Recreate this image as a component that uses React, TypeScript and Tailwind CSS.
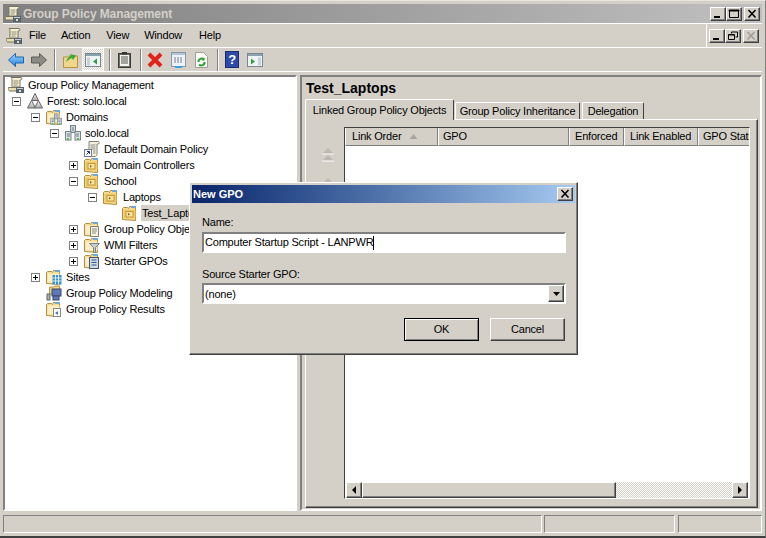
import type { ReactNode } from "react"

const raised = "border border-t-white border-l-white border-r-[#404040] border-b-[#404040] shadow-[inset_-1px_-1px_0_#808080]"
const sunken = "border-2 border-t-[#808080] border-l-[#808080] border-r-white border-b-white"
const checker = "bg-[repeating-conic-gradient(#d4d0c8_0_25%,#fff_0_50%)] bg-[length:2px_2px]"

function ScrollIcon() {
  return (
    <svg width="16" height="16" viewBox="0 0 16 16" className="shrink-0">
      <path d="M3 .5h10c1.200 0 1.200 2 0 2.500h-1v7H5c-1 0-1.500-1-1-2V2.500C4 1.500 3.500 1 3 .5z" fill="#f5f0d4" stroke="#77745e" />
      <path d="M5.500 4h5M5.500 6h5M5.500 8h4" stroke="#8f8c72" />
      <path d="M.5 10.500h9c-.8.800-.8 2.500 0 3.500h-8c-1.200-.5-1.600-2.500-1-3.500z" fill="#e9deb0" stroke="#77745e" />
      <rect x="8" y="10" width="8" height="6" fill="#566370" />
      <rect x="9" y="11" width="6" height="1" fill="#c9d0d6" />
      <rect x="11" y="13" width="2" height="2" fill="#e7dfba" />
    </svg>
  )
}

function ForestIcon() {
  return (
    <svg width="16" height="16" viewBox="0 0 16 16" className="shrink-0">
      <defs>
        <linearGradient id="tri" x1="0" y1="0" x2="0" y2="1">
          <stop offset="0" stopColor="#f4f4f4" />
          <stop offset="1" stopColor="#a8a8a8" />
        </linearGradient>
      </defs>
      <path d="M8 .5l3.500 7h-7z" fill="url(#tri)" stroke="#666" />
      <path d="M4.500 7.500l4 7.500h-8z" fill="url(#tri)" stroke="#666" />
      <path d="M11.500 7.500l4 7.500h-8z" fill="url(#tri)" stroke="#666" />
    </svg>
  )
}

function Server() {
  return (
    <g>
      <rect x="5.500" y=".5" width="5" height="7" fill="#cdd5d9" stroke="#76838a" />
      <rect x=".5" y="6.500" width="5.500" height="8.500" fill="#dbe2e5" stroke="#76838a" />
      <rect x="10" y="6.500" width="5.500" height="8.500" fill="#dbe2e5" stroke="#76838a" />
      <path d="M2 9h3M2 11h3M11 9h3M11 11h3M7 3h2M7 5h2" stroke="#6f7c84" />
      <rect x="2" y="13" width="2" height="2" fill="#55c040" />
      <rect x="12" y="13" width="2" height="2" fill="#55c040" />
    </g>
  )
}

function Folder({ children, ou }: { children?: ReactNode; ou?: boolean }) {
  return (
    <svg width="16" height="16" viewBox="0 0 16 16" className="shrink-0">
      <path d="M.5 14.500v-11l1-1h4l1 1 1-2h6v14z" fill="#f3dc96" stroke="#b58d38" />
      <rect x="9" y="1" width="5" height="2" fill="#6ea8d8" />
      <rect x="1.500" y="4.500" width="12" height="9" fill={ou ? "#f0c964" : "#fbeec4"} />
      {ou && <rect x="4" y="6.500" width="7" height="5.500" fill="#f8e3a0" stroke="#c39a3e" />}
      {ou && <path d="M6 8l2 1.300-2 1.300z" fill="#7c5c16" />}
      {children}
    </svg>
  )
}

function FolderServer() {
  return (
    <Folder>
      <g transform="translate(4.500 4.500) scale(.72)">
        <Server />
      </g>
    </Folder>
  )
}

function GpoIcon() {
  return (
    <svg width="16" height="16" viewBox="0 0 16 16" className="shrink-0">
      <path d="M5 .5h9.500c1 0 1 2 0 2.500H13v10.500c0 1-1 2-2 2H5z" fill="#f3f1e2" stroke="#85836f" />
      <path d="M6.500 4h5M6.500 6h5M6.500 8h5M9 10h2.500M9 12h2.500" stroke="#8f8d78" />
      <rect x=".5" y="8.500" width="7" height="7" fill="#fff" stroke="#7878a8" />
      <path d="M2.500 13.500l3-3M3 10.500h2.500V13" stroke="#26267a" fill="none" />
    </svg>
  )
}

function Expander({ open }: { open: boolean }) {
  return (
    <span className="relative w-[9px] h-[9px] mr-[6px] shrink-0 border border-[#808080] bg-white">
      <span className="absolute left-[1px] top-[3px] w-[5px] h-[1px] bg-black" />
      {!open && <span className="absolute left-[3px] top-[1px] w-[1px] h-[5px] bg-black" />}
    </span>
  )
}

const indent = ["pl-[7px]", "pl-[26px]", "pl-[45px]", "pl-[64px]", "pl-[83px]", "pl-[102px]"]

interface Node {
  label: string
  level: number
  icon: ReactNode
  box?: "open" | "closed"
  selected?: boolean
}

const nodes: Node[] = [
  { label: "Forest: solo.local", level: 0, icon: <ForestIcon />, box: "open" },
  { label: "Domains", level: 1, icon: <FolderServer />, box: "open" },
  { label: "solo.local", level: 2, icon: <svg width="16" height="16" viewBox="0 0 16 16" className="shrink-0"><Server /></svg>, box: "open" },
  { label: "Default Domain Policy", level: 3, icon: <GpoIcon /> },
  { label: "Domain Controllers", level: 3, icon: <Folder ou />, box: "closed" },
  { label: "School", level: 3, icon: <Folder ou />, box: "open" },
  { label: "Laptops", level: 4, icon: <Folder ou />, box: "open" },
  { label: "Test_Laptops", level: 5, icon: <Folder ou />, selected: true },
  {
    label: "Group Policy Objects",
    level: 3,
    box: "closed",
    icon: (
      <Folder>
        <path d="M6.500 5.500h8v10h-8z" fill="#f3f1e2" stroke="#85836f" />
        <path d="M8 8h5M8 10h5M8 12h4" stroke="#8f8d78" />
      </Folder>
    ),
  },
  {
    label: "WMI Filters",
    level: 3,
    box: "closed",
    icon: (
      <Folder>
        <path d="M5.500 6.500h10l-4 4v5h-2v-5z" fill="#c9ced2" stroke="#77818a" />
      </Folder>
    ),
  },
  {
    label: "Starter GPOs",
    level: 3,
    box: "closed",
    icon: (
      <Folder>
        <rect x="5.500" y="4.500" width="9" height="11" fill="#cfd9e6" stroke="#46566e" />
        <path d="M7.500 7h5M7.500 9.500h5M7.500 12h5" stroke="#35558f" />
      </Folder>
    ),
  },
  {
    label: "Sites",
    level: 1,
    box: "closed",
    icon: (
      <Folder>
        <rect x="6.500" y="6" width="9" height="9.500" fill="#3e8fd0" />
        <path d="M6.500 9h9M6.500 12h9M9.500 6v9.500M12.500 6v9.500" stroke="#d8ecfa" />
      </Folder>
    ),
  },
]

function TreeRow({ node }: { node: Node }) {
  return (
    <div className={`flex h-4 items-center whitespace-nowrap ${indent[node.level]}`}>
      {node.box ? <Expander open={node.box === "open"} /> : <span className="w-[15px] shrink-0" />}
      {node.icon}
      <span className={`ml-[3px] pl-[1px] pr-[2px] leading-4 ${node.selected ? "bg-[#d4d0c8]" : ""}`}>{node.label}</span>
    </div>
  )
}

function Sep({ className }: { className: string }) {
  return <div className={`w-[2px] h-[22px] shrink-0 border-l border-l-[#808080] border-r border-r-white ${className}`} />
}

function CaptionButton({ kind, disabled }: { kind: "min" | "max" | "restore" | "close"; disabled?: boolean }) {
  const c = disabled ? "#a09c94" : "#000"
  return (
    <div className={`flex w-4 h-[14px] items-center justify-center bg-[#d4d0c8] ${raised}`}>
      <svg width="12" height="10" viewBox="0 0 12 10">
        {kind === "min" && <rect x="2" y="7" width="6" height="2" fill={c} />}
        {kind === "max" && <path d="M1.500 1.500h9v7h-9zM1 1h10v1H1z" fill="none" stroke={c} />}
        {kind === "restore" && <path d="M4.500 2.500v-1.500h6v5h-2M1.500 3.500h6v5h-6zM1.500 4h6" fill="none" stroke={c} />}
        {kind === "close" && <path d="M2.500 1l7 7.500M9.500 1l-7 7.500" fill="none" stroke={c} strokeWidth="1.600" />}
      </svg>
    </div>
  )
}

function Column({ label, width, sort }: { label: string; width: string; sort?: boolean }) {
  return (
    <div className={`flex h-[18px] shrink-0 items-center gap-[8px] overflow-hidden whitespace-nowrap bg-[#d4d0c8] border-r border-r-[#808080] border-l border-l-white border-b border-b-[#808080] ${width}`}>
      {label}
      {sort && (
        <svg width="9" height="5" viewBox="0 0 9 5">
          <path d="M4.500 0l4 5h-8z" fill="#a8a49c" />
        </svg>
      )}
    </div>
  )
}

function ScrollButton({ dir }: { dir: "left" | "right" }) {
  return (
    <div className={`flex w-4 h-[16px] shrink-0 items-center justify-center bg-[#d4d0c8] ${raised}`}>
      <svg width="5" height="8" viewBox="0 0 5 8">
        <path d={dir === "left" ? "M4 0v8L0 4z" : "M0 0v8l4-4z"} fill="#000" />
      </svg>
    </div>
  )
}

function MoveArrows() {
  return (
    <svg width="14" height="14" viewBox="0 0 14 14">
      <path d="M7 0l6 6H1z" fill="#bdb9b0" />
      <path d="M7 7l6 6H1z" fill="#bdb9b0" />
      <path d="M1 6h12M1 13h12" stroke="#fff" />
    </svg>
  )
}

export default function App() {
  return (
    <div className="w-[766px] h-[538px] overflow-hidden bg-[#d4d0c8] text-[11px] tracking-[-0.2px] text-black font-['Liberation_Sans',sans-serif] flex flex-col border-t border-t-[#e8e5de] border-b-[2px] border-b-[#404040] border-r border-r-[#808080] pt-[3px] pr-[3px] pl-[3px]">
      {/* title bar */}
      <div className="flex h-[19px] shrink-0 items-center bg-gradient-to-r from-[#808080] to-[#c0c0c0] pl-[2px] pr-[2px]">
        <ScrollIcon />
        <span className="ml-[2px] text-[12px] tracking-[-0.1px] font-bold text-[#d4d0c8]">Group Policy Management</span>
        <div className="ml-auto flex">
          <CaptionButton kind="min" />
          <CaptionButton kind="max" />
          <div className="ml-[2px]">
            <CaptionButton kind="close" />
          </div>
        </div>
      </div>

      {/* menu bar */}
      <div className="flex h-[25px] shrink-0 items-center border-t border-t-white border-b border-b-white">
        <div className="flex flex-1 items-center pl-[3px]">
          <ScrollIcon />
          <nav className="flex items-center">
            <span className="ml-[7px]">File</span>
            <span className="ml-[15px]">Action</span>
            <span className="ml-[16px]">View</span>
            <span className="ml-[15px]">Window</span>
            <span className="ml-[17px]">Help</span>
          </nav>
        </div>
        <div className="flex h-full w-[56px] items-center border-l border-l-white pl-[2px]">
          <CaptionButton kind="min" />
          <CaptionButton kind="restore" />
          <div className="ml-[2px]">
            <CaptionButton kind="close" disabled />
          </div>
        </div>
      </div>

      {/* toolbar */}
      <div className="flex h-[24px] shrink-0 items-center border-b border-b-white">
        <svg width="16" height="14" viewBox="0 0 16 14" className="ml-[5px] shrink-0">
          <defs>
            <linearGradient id="blue" x1="0" y1="0" x2="0" y2="1">
              <stop offset="0" stopColor="#a5d8fa" />
              <stop offset="1" stopColor="#1f7fdc" />
            </linearGradient>
          </defs>
          <path d="M7.500.5L.500 7l7 6.500V10H15.500V4H7.500z" fill="url(#blue)" stroke="#1b62b8" />
        </svg>
        <svg width="16" height="14" viewBox="0 0 16 14" className="ml-[7px] shrink-0">
          <path d="M8.500.5l7 6.500-7 6.500V10H.500V4h8z" fill="#8c8c86" stroke="#5a5a56" />
        </svg>
        <Sep className="ml-[7px]" />
        <svg width="15" height="16" viewBox="0 0 15 16" className="ml-[7px] shrink-0">
          <path d="M.500 15.500V5h4l1-1h9v11.500z" fill="#f0d68a" stroke="#b8923e" />
          <path d="M3 10c1-4 3-5.500 5-6L7 2l6 1.500L10 8 9 6C6.500 7 5 8 3 10z" fill="#35a835" />
        </svg>
        <div className={`flex w-[22px] h-[23px] ml-[4px] shrink-0 items-center justify-center border border-t-[#f4f2ee] border-l-[#f4f2ee] border-r-white border-b-white ${checker}`}>
          <svg width="16" height="16" viewBox="0 0 16 16">
            <rect x=".5" y="1.500" width="15" height="13" fill="#eef3f6" stroke="#7a8890" />
            <rect x="1" y="2" width="14" height="2" fill="#8aa2b0" />
            <rect x="2" y="5.500" width="3" height="8" fill="#c6d3da" />
            <path d="M12 6.500v6l-4-3z" fill="#2e9e3c" />
          </svg>
        </div>
        <Sep className="ml-[5px]" />
        <svg width="13" height="16" viewBox="0 0 13 16" className="ml-[7px] shrink-0">
          <rect x=".5" y="1.500" width="12" height="14" fill="#6e6e68" stroke="#3c3c38" />
          <rect x="2" y="3" width="9" height="11" fill="#f4f4ee" />
          <path d="M3 5h7M3 7h7M3 9h7M3 11h7" stroke="#55554f" />
          <rect x="4" y="0" width="5" height="2.500" fill="#33332f" />
        </svg>
        <Sep className="ml-[9px]" />
        <svg width="16" height="16" viewBox="0 0 16 16" className="ml-[5px] shrink-0">
          <path d="M2 2l12 12M14 2L2 14" stroke="#e0241c" strokeWidth="4" />
        </svg>
        <svg width="15" height="16" viewBox="0 0 15 16" className="ml-[8px] shrink-0">
          <rect x=".5" y=".5" width="14" height="14" fill="#eef2f7" stroke="#8a97a6" />
          <rect x="1" y="1" width="13" height="2" fill="#b4c4d6" />
          <path d="M3 6h9M3 8h9M3 10h9" stroke="#6f7f92" strokeDasharray="2 1" />
          <rect x="4" y="14" width="7" height="2" fill="#36a4e4" />
        </svg>
        <svg width="13" height="16" viewBox="0 0 13 16" className="ml-[9px] shrink-0">
          <path d="M.500.500h8l4 4v11H.500z" fill="#fbfbf6" stroke="#a0a098" />
          <path d="M3.500 10a3.200 3.200 0 0 1 5.500-2.500M9.500 10A3.200 3.200 0 0 1 4 12.500" fill="none" stroke="#2e9e3c" strokeWidth="2" />
          <path d="M9.500 5.500v3h-3z" fill="#2e9e3c" />
        </svg>
        <Sep className="ml-[9px]" />
        <div className="flex w-[14px] h-[17px] ml-[6px] shrink-0 items-center justify-center bg-[#2f49a8] border border-[#1b2a6e] text-[13px] font-bold text-white">?</div>
        <svg width="16" height="16" viewBox="0 0 16 16" className="ml-[8px] shrink-0">
          <rect x=".5" y="1.500" width="15" height="13" fill="#eef3f6" stroke="#7a8890" />
          <rect x="1" y="2" width="14" height="2" fill="#8aa2b0" />
          <rect x="11" y="5.500" width="3" height="8" fill="#c6d3da" />
          <path d="M4 6.500v6l4-3z" fill="#2e9e3c" />
        </svg>
      </div>

      {/* panes */}
      <div className="flex h-[439px] shrink-0 gap-[3px] pt-[3px]">
        <div className={`w-[294px] shrink-0 bg-white ${sunken} border-t-[#404040] border-l-[#404040]`}>
          <div className="flex h-4 items-center whitespace-nowrap pl-[3px]">
            <ScrollIcon />
            <span className="ml-[4px]">Group Policy Management</span>
          </div>
          {nodes.map((n) => (
            <TreeRow key={n.label} node={n} />
          ))}
          <div className="flex h-4 items-center whitespace-nowrap pl-[41px]">
            <svg width="16" height="16" viewBox="0 0 16 16" className="shrink-0">
              <path d="M3.500 9V2h4l1-1h5v8z" fill="#f0d68a" stroke="#b8923e" />
              <rect x="6" y="4" width="9" height="7" fill="#5d78b8" stroke="#38486e" />
              <rect x="1" y="9" width="3" height="6" fill="#a8b0a8" stroke="#666" />
              <rect x="7" y="11" width="6" height="4" fill="#5d78b8" stroke="#38486e" />
            </svg>
            <span className="ml-[4px]">Group Policy Modeling</span>
          </div>
          <div className="flex h-4 items-center whitespace-nowrap pl-[41px]">
            <Folder>
              <rect x="7.500" y="7.500" width="7" height="8" fill="#fff" stroke="#8a8a84" />
              <path d="M12 10l-3 2 3 2z" fill="#3a7fb8" />
            </Folder>
            <span className="ml-[4px]">Group Policy Results</span>
          </div>
        </div>

        <div className={`flex-1 min-w-0 flex flex-col pl-[3px] pr-[2px] pb-[1px] ${sunken} border-t-[#404040] border-l-[#404040]`}>
          <div className="h-[22px] shrink-0 pl-[1px] pt-[1px] text-[14px] tracking-normal font-bold leading-[20px]">Test_Laptops</div>
          <div className="flex h-[20px] shrink-0 items-end relative z-10">
            <div className="w-[149px] h-[21px] flex items-center justify-center mb-[-1px] bg-[#d4d0c8] border border-b-0 border-t-white border-l-white border-r-[#404040] rounded-t-[2px]">Linked Group Policy Objects</div>
            <div className="w-[125px] h-[17px] ml-[1px] flex items-center justify-center border border-b-0 border-t-white border-l-white border-r-[#404040] rounded-t-[2px]">Group Policy Inheritance</div>
            <div className="w-[62px] h-[17px] ml-[2px] flex items-center justify-center border border-b-0 border-t-white border-l-white border-r-[#404040] rounded-t-[2px]">Delegation</div>
          </div>
          <div className={`flex-1 min-h-0 flex pl-[15px] pt-[7px] pr-[7px] pb-[8px] ${raised}`}>
            <div className="w-[23px] shrink-0 flex flex-col items-start gap-[16px] pt-[21px]">
              <MoveArrows />
              <MoveArrows />
            </div>
            <div className="flex-1 min-w-0 flex flex-col border border-t-[#404040] border-l-[#404040] border-r-white border-b-white bg-white">
              <div className="flex overflow-hidden shrink-0">
                <Column label="Link Order" width="w-[93px] pl-[6px]" sort />
                <Column label="GPO" width="w-[131px] pl-[4px]" />
                <Column label="Enforced" width="w-[55px] pl-[5px]" />
                <Column label="Link Enabled" width="w-[74px] pl-[5px]" />
                <Column label="GPO Status" width="w-[60px] pl-[4px]" />
              </div>
              <div className="flex-1" />
              <div className="flex h-[16px] shrink-0 mx-[1px]">
                <ScrollButton dir="left" />
                <div className={`w-[254px] bg-[#d4d0c8] ${raised}`} />
                <div className={`flex-1 ${checker}`} />
                <ScrollButton dir="right" />
              </div>
            </div>
          </div>
        </div>
      </div>

      {/* status bar */}
      <div className="flex h-[18px] shrink-0 gap-[2px] mt-[4px]">
        <div className="w-[540px] border border-t-[#808080] border-l-[#808080] border-r-white border-b-white" />
        <div className="w-[131px] border border-t-[#808080] border-l-[#808080] border-r-white border-b-white" />
        <div className="w-[84px] ml-[1px] border border-t-[#808080] border-l-[#808080] border-r-white border-b-white" />
      </div>

      {/* New GPO dialog */}
      <div className={`absolute left-[189px] top-[182px] w-[389px] h-[173px] p-[2px] bg-[#d4d0c8] ${raised}`}>
        <div className="flex h-[18px] items-center justify-between bg-gradient-to-r from-[#0a246a] to-[#a6caf0] pl-[1px] pr-[2px]">
          <span className="text-[11px] tracking-normal font-bold text-white">New GPO</span>
          <CaptionButton kind="close" />
        </div>
        <div className="flex flex-col pl-[10px] pr-[9px] pt-[10px]">
          <label className="h-[19px] leading-[18px]">Name:</label>
          <div className={`flex h-[21px] items-center bg-white pl-[1px] ${sunken}`}>
            Computer Startup Script - LANPWR<span className="w-[1px] h-[14px] bg-black" />
          </div>
          <label className="h-[18px] leading-[18px] mt-[12px]">Source Starter GPO:</label>
          <div className={`flex h-[21px] items-center justify-between bg-white pl-[1px] ${sunken}`}>
            <span className="pt-[1px]">(none)</span>
            <div className={`flex w-4 h-[17px] items-center justify-center bg-[#d4d0c8] ${raised}`}>
              <svg width="7" height="4" viewBox="0 0 7 4">
                <path d="M0 0h7L3.500 4z" fill="#000" />
              </svg>
            </div>
          </div>
          <div className="flex justify-end gap-[11px] mt-[14px] mr-[1px]">
            <button className="w-[75px] h-[23px] bg-[#d4d0c8] border border-black shadow-[inset_1px_1px_0_#fff,inset_-1px_-1px_0_#808080]">OK</button>
            <button className={`w-[75px] h-[23px] bg-[#d4d0c8] ${raised}`}>Cancel</button>
          </div>
        </div>
      </div>
    </div>
  )
}
